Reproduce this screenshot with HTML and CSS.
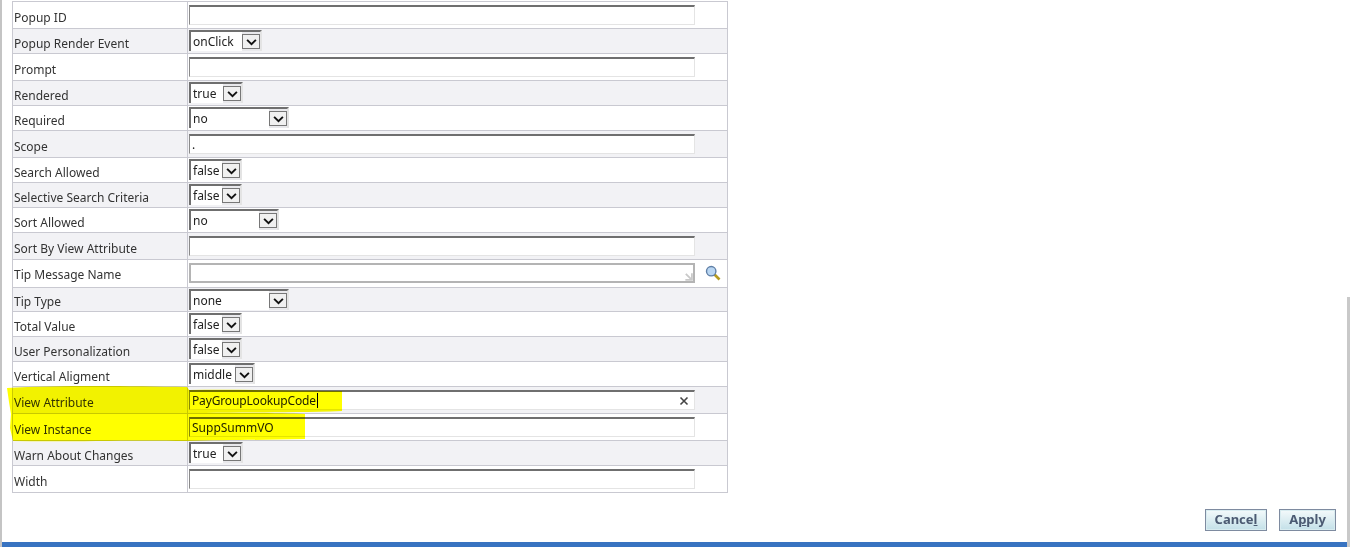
FILE: index.html
```html
<!DOCTYPE html>
<html lang="en">
<head>
<meta charset="utf-8">
<title>Personalize Item</title>
<link rel="stylesheet" href="styles.css">
</head>
<body>
<div class="page">
  <main class="content">
    <table class="props">
      <tr class="h27 text-row"><th>Popup ID</th><td><div class="field"></div></td></tr>
      <tr class="h25 alt"><th>Popup Render Event</th><td><div class="select w73"><span>onClick</span><i class="arrow"><svg viewBox="0 0 10 7"><path d="M1 1.5 5 5.5 9 1.5"/></svg></i></div></td></tr>
      <tr class="h27 text-row"><th>Prompt</th><td><div class="field"></div></td></tr>
      <tr class="h25 alt"><th>Rendered</th><td><div class="select w54"><span>true</span><i class="arrow"><svg viewBox="0 0 10 7"><path d="M1 1.5 5 5.5 9 1.5"/></svg></i></div></td></tr>
      <tr class="h25"><th>Required</th><td><div class="select w100"><span>no</span><i class="arrow"><svg viewBox="0 0 10 7"><path d="M1 1.5 5 5.5 9 1.5"/></svg></i></div></td></tr>
      <tr class="h27 text-row alt"><th>Scope</th><td><div class="field">.</div></td></tr>
      <tr class="h25"><th>Search Allowed</th><td><div class="select w53"><span>false</span><i class="arrow"><svg viewBox="0 0 10 7"><path d="M1 1.5 5 5.5 9 1.5"/></svg></i></div></td></tr>
      <tr class="h25 alt"><th>Selective Search Criteria</th><td><div class="select w53"><span>false</span><i class="arrow"><svg viewBox="0 0 10 7"><path d="M1 1.5 5 5.5 9 1.5"/></svg></i></div></td></tr>
      <tr class="h25"><th>Sort Allowed</th><td><div class="select w90"><span>no</span><i class="arrow"><svg viewBox="0 0 10 7"><path d="M1 1.5 5 5.5 9 1.5"/></svg></i></div></td></tr>
      <tr class="h27 text-row alt"><th>Sort By View Attribute</th><td><div class="field"></div></td></tr>
      <tr class="h28"><th>Tip Message Name</th><td>
        <div class="lov">
          <div class="field boxed"><svg class="grip" viewBox="0 0 10 10"><path d="M8.800 1.500V8.800H1.500M8.800 8.800 2 2"/></svg></div>
          <svg class="search" viewBox="0 0 16 16"><path class="handle" d="M9.500 9.500 14.500 14.500"/><circle class="lens" cx="6.200" cy="6.200" r="4.700"/></svg>
        </div>
      </td></tr>
      <tr class="h24 alt"><th>Tip Type</th><td><div class="select w100"><span>none</span><i class="arrow"><svg viewBox="0 0 10 7"><path d="M1 1.5 5 5.5 9 1.5"/></svg></i></div></td></tr>
      <tr class="h25"><th>Total Value</th><td><div class="select w53"><span>false</span><i class="arrow"><svg viewBox="0 0 10 7"><path d="M1 1.5 5 5.5 9 1.5"/></svg></i></div></td></tr>
      <tr class="h25 alt"><th>User Personalization</th><td><div class="select w53"><span>false</span><i class="arrow"><svg viewBox="0 0 10 7"><path d="M1 1.5 5 5.5 9 1.5"/></svg></i></div></td></tr>
      <tr class="h25"><th>Vertical Aligment</th><td><div class="select w66"><span>middle</span><i class="arrow"><svg viewBox="0 0 10 7"><path d="M1 1.5 5 5.5 9 1.5"/></svg></i></div></td></tr>
      <tr class="h27 text-row alt"><th>View Attribute</th><td><div class="field"><span class="tight">PayGroupLookupCode</span><b class="caret"></b><svg class="clear" viewBox="0 0 10 10"><path d="M1.500 1.500 8.500 8.500M8.500 1.500 1.500 8.500"/></svg></div></td></tr>
      <tr class="h27 text-row"><th>View Instance</th><td><div class="field">SuppSummVO</div></td></tr>
      <tr class="h25 alt"><th>Warn About Changes</th><td><div class="select w54"><span>true</span><i class="arrow"><svg viewBox="0 0 10 7"><path d="M1 1.5 5 5.5 9 1.5"/></svg></i></div></td></tr>
      <tr class="h27 text-row"><th>Width</th><td><div class="field"></div></td></tr>
    </table>
    <div class="actions">
      <button class="btn btn-cancel" type="button">Cance<u>l</u></button>
      <button class="btn btn-apply" type="button">A<u>p</u>ply</button>
    </div>
  </main>
  <div class="bottom-bar"></div>
  <div class="scroll-thumb"></div>
  <svg class="marker" viewBox="0 0 350 70" aria-hidden="true">
    <path class="ink" d="M7 8 C60 5 130 6 187 7 L189 10 C240 9 300 11 342 11 L342 31 C290 33 240 32 205 33 C240 33 280 33 305 34 L305 59 C260 60 230 60 187 61 C120 60 70 62 13 61 L10 48 L11 34 L9 22 Z"/>
  </svg>
</div>
</body>
</html>
```
FILE: styles.css
```css
* { box-sizing: border-box; }
html, body { margin: 0; height: 100%; overflow: hidden; background: #fff; }
body { font-family: "Noto Sans", "DejaVu Sans", sans-serif; font-size: 12px; color: #333; }

.page {
  position: relative;
  width: 1350px;
  height: 547px;
  display: flex;
  flex-direction: column;
  border-left: 2px solid #c4c4c4;
  overflow: hidden;
}
.content { flex: 1; padding: 1px 0 0 10px; min-height: 0; }

.props {
  width: 716px;
  table-layout: fixed;
  border-collapse: collapse;
  border: 1px solid #c9c9d1;
}
.props tr { border-top: 1px solid #c9c9d1; }
.props th, .props td { padding: 0; vertical-align: top; }
.props th {
  width: 175px;
  padding: 7px 0 0 1px;
  font-weight: normal;
  text-align: left;
  line-height: 16px;
  white-space: nowrap;
  border-right: 1px solid #c9c9d1;
}
.props td { padding: 1px 0 0 1px; }
.props .text-row th { padding-top: 8px; }
.props .h24 th { padding-top: 6px; }
.alt { background: #f2f2f5; }
.h24 { height: 24px; }
.h25 { height: 25px; }
.h27 { height: 27px; }
.h28 { height: 28px; }

.field {
  display: flex;
  align-items: center;
  width: 506px;
  height: 20px;
  margin-top: 2px;
  padding: 0 4px 0 2px;
  background: #fff;
  border: 1px solid #e4e4e4;
  border-top: 2px solid #6f6f6f;
  border-left: 1px solid #8a8a8a;
  line-height: 16px;
  color: #222;
}
.field.boxed { position: relative; margin-top: 0; border: 2px solid #b4b4b4; }
.tight { letter-spacing: -0.15px; }
.caret { width: 1px; height: 15px; background: #000; margin-left: 1px; }
.clear { width: 10px; height: 10px; margin-left: auto; margin-right: 1px; }
.clear path { fill: none; stroke: #444; stroke-width: 1.600; }
.grip { position: absolute; right: 0; bottom: 0; width: 9px; height: 9px; }
.grip path { fill: none; stroke: #c9c9c9; stroke-width: 2; }

.lov { display: flex; align-items: center; margin-top: 2px; }
.search { width: 16px; height: 16px; margin-left: 10px; }
.lens { fill: #b9d6f2; stroke: #5f7fa6; stroke-width: 1.400; }
.handle { fill: none; stroke: #b59a1e; stroke-width: 2.600; }

.select {
  display: flex;
  align-items: stretch;
  height: 21px;
  background: #e9e9ec;
  border-top: 2px solid #6f6f6f;
  border-left: 2px solid #6f6f6f;
  border-right: 2px solid #e4e4e4;
  line-height: 19px;
  color: #222;
}
.select span { flex: 1; padding-left: 2px; background: #fff; overflow: hidden; }
.w53 { width: 53px; }
.w54 { width: 54px; }
.w66 { width: 66px; }
.w73 { width: 73px; }
.w90 { width: 90px; }
.w100 { width: 100px; }
.arrow {
  display: flex;
  align-items: center;
  justify-content: center;
  flex: none;
  width: 18px;
  height: 15px;
  margin-top: 2px;
  background: #f0f0f0;
  border: 1px solid #777;
}
.arrow svg { width: 11px; height: 8px; }
.arrow path { fill: none; stroke: #111; stroke-width: 1.700; }

.actions { display: flex; justify-content: flex-end; gap: 12px; margin-top: 16px; padding-right: 14px; }
.btn {
  height: 22px;
  padding: 0 0 2px;
  font: bold 13px "Noto Sans", "DejaVu Sans", sans-serif;
  color: #4b5a72;
  background: linear-gradient(#f4fafb, #c3e0e8);
  border: 1px solid #7e8ba0;
  box-shadow: inset 0 0 0 1px #d8ecf0;
}
.btn-cancel { width: 62px; }
.btn-apply { width: 57px; }

.bottom-bar { height: 5px; width: 1345px; background: #3873c1; flex: none; }

.scroll-thumb {
  position: absolute;
  right: 0;
  top: 297px;
  bottom: 0;
  width: 3px;
  background: #c9c9c9;
}

.marker {
  position: absolute;
  left: -2px;
  top: 380px;
  width: 350px;
  height: 70px;
  mix-blend-mode: multiply;
  pointer-events: none;
}
.ink { fill: #ffff00; }
```
